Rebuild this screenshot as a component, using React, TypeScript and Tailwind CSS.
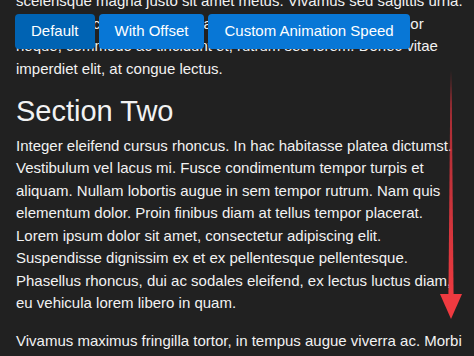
import React from "react";

const buttons = [
  { label: "Default", active: true },
  { label: "With Offset", active: false },
  { label: "Custom Animation Speed", active: false },
];

function ScrollArrow() {
  return (
    <svg
      className="pointer-events-none absolute left-[436px] top-[70px]"
      width="30"
      height="252"
      viewBox="0 0 30 252"
    >
      <defs>
        <linearGradient id="fade" x1="0" y1="0" x2="0" y2="1">
          <stop offset="0" stopColor="#e5353b" stopOpacity="0" />
          <stop offset="0.15" stopColor="#c8303a" stopOpacity="0.8" />
          <stop offset="1" stopColor="#ef3a40" />
        </linearGradient>
      </defs>
      <polygon points="14.5,0 15.5,0 17.6,228 12.4,228" fill="url(#fade)" />
      <polygon points="4,224 26,224 15,249" fill="#ef3a40" />
    </svg>
  );
}

export default function App() {
  return (
    <div
      className="relative h-[356px] w-[474px] overflow-hidden bg-[#212121] text-[#f2f2f2]"
      style={{ fontFamily: '"Liberation Sans", Arial, sans-serif' }}
    >
      <div className="mt-[-10px] pl-4 pr-[10px] text-[15px] leading-[22.5px]">
        <p className="mb-[14px]">
          scelerisque magna justo sit amet metus. Vivamus sed sagittis urna.
          Quisque auctor lacus in ligula viverra, vel ornare nunc tempor
          neque, commodo ac tincidunt et, rutrum sed lorem. Donec vitae
          imperdiet elit, at congue lectus.
        </p>
        <h2 className="mb-[6px] text-[29px] leading-[1.2]">Section Two</h2>
        <p className="mb-[15px]">
          Integer eleifend cursus rhoncus. In hac habitasse platea dictumst.
          Vestibulum vel lacus mi. Fusce condimentum tempor turpis et aliquam.
          Nullam lobortis augue in sem tempor rutrum. Nam quis elementum dolor.
          Proin finibus diam at tellus tempor placerat. Lorem ipsum dolor sit
          amet, consectetur adipiscing elit. Suspendisse dignissim ex et ex
          pellentesque pellentesque. Phasellus rhoncus, dui ac sodales
          eleifend, ex lectus luctus diam, eu vehicula lorem libero in quam.
        </p>
        <p>
          Vivamus maximus fringilla tortor, in tempus augue viverra ac. Morbi
          vel lectus non arcu blandit efficitur.
        </p>
      </div>

      <div className="absolute left-[15px] top-[14px] flex gap-1">
        {buttons.map((b) => (
          <button
            key={b.label}
            className={
              b.active
                ? "h-[35px] rounded-[4px] bg-[#0063b3] px-4 text-[15px] text-white"
                : "h-[35px] rounded-[4px] bg-[#0877d6] px-4 text-[15px] text-white"
            }
          >
            {b.label}
          </button>
        ))}
      </div>

      <ScrollArrow />
    </div>
  );
}
